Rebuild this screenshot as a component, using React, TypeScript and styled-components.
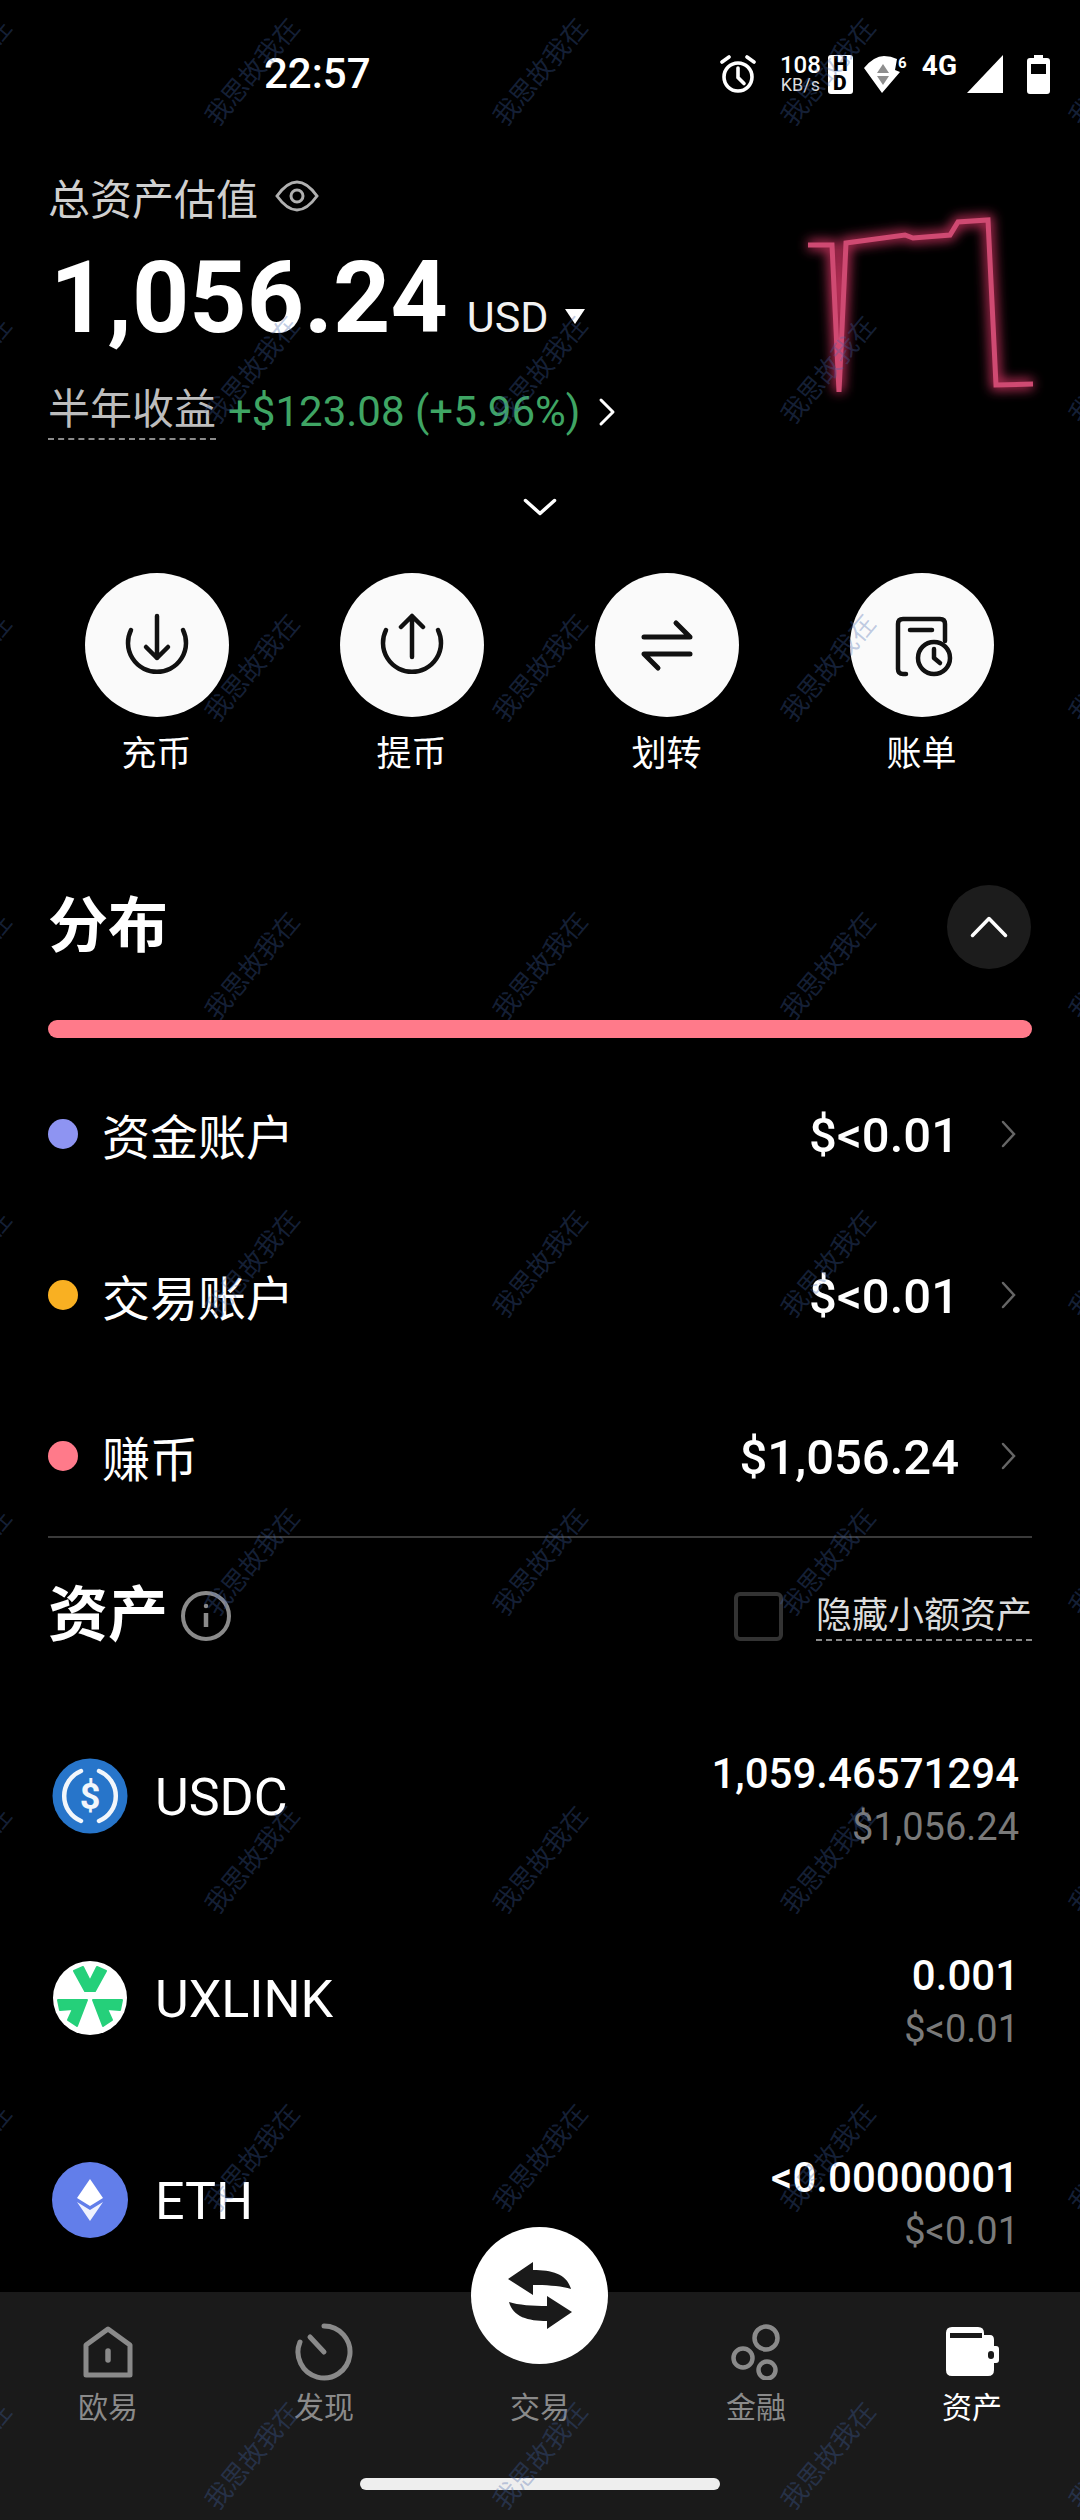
import React from "react";
import styled, { createGlobalStyle } from "styled-components";

const GlobalStyle = createGlobalStyle`
  html, body {
    margin: 0;
    padding: 0;
    background: #000;
  }
  * {
    box-sizing: border-box;
  }
`;

const Page = styled.div`
  position: relative;
  width: 1080px;
  height: 2520px;
  overflow: hidden;
  display: flex;
  flex-direction: column;
  background: #000;
  color: #fff;
  font-family: Roboto, "Noto Sans CJK SC", sans-serif;
`;

const Content = styled.div`
  flex: 1;
  min-height: 0;
  overflow: hidden;
`;

/* status bar */
const StatusBar = styled.div`
  height: 148px;
  display: flex;
  align-items: center;
  padding: 0 30px 0 264px;
`;

const Clock = styled.div`
  font-size: 42px;
  font-weight: 500;
  line-height: 1;
  margin-right: auto;
`;

const StatusSlot = styled.div<{ $gap: number }>`
  display: flex;
  align-items: center;
  margin-left: ${({ $gap }) => $gap}px;
`;

const NetSpeed = styled.div`
  display: flex;
  flex-direction: column;
  align-items: center;
  font-size: 24px;
  font-weight: 500;
  line-height: 21px;
  & > span {
    font-size: 18px;
    line-height: 17px;
    font-weight: 400;
    color: #ddd;
  }
`;

const HdBadge = styled.div`
  width: 25px;
  height: 39px;
  border-radius: 3px;
  background: #fff;
  color: #000;
  display: flex;
  flex-direction: column;
  align-items: center;
  font-size: 21px;
  font-weight: 900;
  line-height: 19px;
`;

const NetType = styled.div`
  font-size: 28px;
  font-weight: 700;
  line-height: 1;
  margin-top: -16px;
`;

/* balance header */
const Header = styled.div`
  display: flex;
  justify-content: space-between;
  height: 294px;
  padding: 0 30px 0 48px;
`;

const HeaderLeft = styled.div`
  display: flex;
  flex-direction: column;
`;

const TitleRow = styled.div`
  height: 96px;
  display: flex;
  align-items: center;
  gap: 17px;
  font-size: 42px;
  color: #cfcfcf;
`;

const BalanceRow = styled.div`
  height: 108px;
  display: flex;
  align-items: baseline;
  padding-left: 2px;
`;

const BalanceValue = styled.div`
  font-size: 100px;
  font-weight: 700;
  line-height: 108px;
`;

const Currency = styled.div`
  font-size: 43px;
  margin-left: 19px;
  color: #f2f2f2;
`;

const Caret = styled.div`
  width: 0;
  height: 0;
  margin-left: 16px;
  border-left: 10px solid transparent;
  border-right: 10px solid transparent;
  border-top: 15px solid #fff;
  transform: translateY(-8px);
`;

const YieldRow = styled.div`
  margin-top: 31px;
  display: flex;
  align-items: center;
  font-size: 42px;
  line-height: 54px;
`;

const YieldLabel = styled.div`
  color: #bdbdbd;
  border-bottom: 2px dashed #8a8a8a;
  padding-bottom: 1px;
  margin-right: 12px;
`;

const YieldValue = styled.div`
  color: #3fa564;
  margin-right: 18px;
`;

const ExpandRow = styled.div`
  height: 131px;
  padding-top: 55px;
  display: flex;
  justify-content: center;
  align-items: flex-start;
`;

const Chart = styled.svg`
  margin-top: 52px;
  flex: none;
`;

/* quick actions */
const Actions = styled.div`
  display: grid;
  grid-template-columns: repeat(4, 255px);
  padding: 0 29px;
`;

const Action = styled.div`
  display: flex;
  flex-direction: column;
  align-items: center;
`;

const ActionCircle = styled.div`
  width: 144px;
  height: 144px;
  border-radius: 50%;
  background: #fafafa;
  display: flex;
  align-items: center;
  justify-content: center;
`;

const ActionLabel = styled.div`
  margin-top: 18px;
  font-size: 35px;
  line-height: 40px;
`;

/* distribution */
const SectionHead = styled.div`
  margin-top: 110px;
  padding: 0 49px 0 48px;
  height: 84px;
  display: flex;
  align-items: center;
  justify-content: space-between;
`;

const SectionTitle = styled.div`
  font-size: 60px;
  font-weight: 700;
  line-height: 1;
`;

const CollapseButton = styled.div`
  width: 84px;
  height: 84px;
  border-radius: 50%;
  background: #1c1c1c;
  display: flex;
  align-items: center;
  justify-content: center;
`;

const DistBar = styled.div`
  margin: 51px 48px 0;
  height: 18px;
  border-radius: 9px;
  background: #ff7a8a;
`;

const DistList = styled.div`
  margin-top: 15px;
  padding: 0 48px;
`;

const DistRow = styled.div`
  height: 161px;
  display: flex;
  align-items: center;
`;

const Dot = styled.div<{ $color: string }>`
  width: 30px;
  height: 30px;
  border-radius: 50%;
  background: ${({ $color }) => $color};
`;

const DistName = styled.div`
  margin-left: 24px;
  font-size: 48px;
  margin-right: auto;
`;

const DistValue = styled.div`
  font-size: 49px;
  font-weight: 500;
  transform: translateY(2px);
`;

const DistArrow = styled.svg`
  margin-left: 42px;
  margin-right: 16px;
`;

const Divider = styled.div`
  margin: 0 48px;
  height: 2px;
  background: #3a3a3a;
`;

/* assets */
const AssetsHead = styled.div`
  height: 100px;
  margin-top: 28px;
  padding: 0 48px;
  display: flex;
  align-items: center;
`;

const AssetsInfo = styled.svg`
  margin-left: 12px;
  margin-right: auto;
`;

const CheckBox = styled.div`
  width: 49px;
  height: 49px;
  border: 4px solid #333;
  border-radius: 6px;
  margin-right: 33px;
`;

const HideLabel = styled.div`
  font-size: 36px;
  line-height: 46px;
  color: #dcdcdc;
  border-bottom: 2px dashed #8a8a8a;
  transform: translateY(1px);
`;

const AssetList = styled.div`
  margin-top: 29px;
  padding: 0 61px 0 52px;
`;

const AssetRow = styled.div`
  height: 202px;
  display: flex;
  align-items: center;
`;

const AssetName = styled.div`
  margin-left: 27px;
  margin-right: auto;
  font-size: 52px;
  transform: translateY(1px);
`;

const AssetAmounts = styled.div`
  display: flex;
  flex-direction: column;
  align-items: flex-end;
  gap: 3px;
  transform: translateY(4px);
`;

const AssetQty = styled.div`
  font-size: 42px;
  font-weight: 500;
  line-height: 50px;
`;

const AssetFiat = styled.div`
  font-size: 38px;
  line-height: 50px;
  color: #7a7a7a;
`;

/* bottom tabs */
const TabBar = styled.div`
  position: relative;
  height: 228px;
  flex: none;
  background: #1a1a1a;
`;

const Tabs = styled.div`
  display: grid;
  grid-template-columns: repeat(5, 216px);
  padding-top: 30px;
`;

const Tab = styled.div`
  display: flex;
  flex-direction: column;
  align-items: center;
`;

const TabIcon = styled.div`
  height: 60px;
  display: flex;
  align-items: center;
  justify-content: center;
`;

const TabLabel = styled.div<{ $active?: boolean }>`
  margin-top: 7px;
  font-size: 30px;
  line-height: 38px;
  color: ${({ $active }) => ($active ? "#fff" : "#8a8a8a")};
`;

const TradeButton = styled.div`
  position: absolute;
  left: 471px;
  top: -65px;
  width: 137px;
  height: 137px;
  border-radius: 50%;
  background: #fff;
  display: flex;
  align-items: center;
  justify-content: center;
`;

const HomeIndicator = styled.div`
  position: absolute;
  left: 360px;
  bottom: 30px;
  width: 360px;
  height: 12px;
  border-radius: 6px;
  background: #eee;
`;

/* watermark */
const WatermarkLayer = styled.div`
  position: absolute;
  left: -182px;
  top: -79px;
  display: grid;
  grid-template-columns: repeat(6, 288px);
  grid-auto-rows: 298px;
  pointer-events: none;
`;

const Watermark = styled.div`
  display: flex;
  align-items: center;
  justify-content: center;
  font-family: "Noto Sans CJK SC", sans-serif;
  font-size: 26px;
  white-space: nowrap;
  color: rgba(66, 100, 170, 0.32);
  transform: rotate(-50deg);
`;

const AlarmIcon = () => (
  <svg width="36" height="38" viewBox="0 0 36 38" fill="none" stroke="#fff" strokeWidth="3.6" strokeLinecap="round">
    <circle cx="18" cy="22" r="14" />
    <path d="M18 13v9.5l6 6" />
    <path d="M2 7l7-5M34 7l-7-5" />
  </svg>
);

const WifiIcon = () => (
  <svg width="44" height="38" viewBox="0 0 44 38">
    <path d="M0 13Q10 1 20 1 27 1 33 4L31 15 36 17 18 38Z" fill="#fff" />
    <path d="M19 9l6 9H13zM13 21h12l-6 9z" fill="#8e8e8e" />
    <text x="34" y="13" fontSize="15" fontWeight="700" fill="#fff">6</text>
  </svg>
);

const SignalIcon = () => (
  <svg width="36" height="38" viewBox="0 0 36 38">
    <path d="M36 0V38H0Z" fill="#fff" />
  </svg>
);

const BatteryIcon = () => (
  <svg width="23" height="39" viewBox="0 0 23 39">
    <path d="M7 0h9v3h4a3 3 0 0 1 3 3v30a3 3 0 0 1-3 3H3a3 3 0 0 1-3-3V6a3 3 0 0 1 3-3h4z" fill="#fff" />
    <rect x="4" y="9" width="15" height="10" fill="#000" />
  </svg>
);

const EyeIcon = () => (
  <svg width="44" height="32" viewBox="0 0 44 32" fill="none" stroke="#b0b0b0" strokeWidth="3">
    <path d="M2 16Q12 2 22 2T42 16Q32 30 22 30T2 16Z" />
    <circle cx="22" cy="16" r="6" />
  </svg>
);

const SmallChevron = ({ dir, color, w, h, sw }: { dir: "right" | "down" | "up"; color: string; w: number; h: number; sw: number }) => {
  const d =
    dir === "right"
      ? `M${sw} ${sw}L${w - sw} ${h / 2}L${sw} ${h - sw}`
      : dir === "down"
        ? `M${sw} ${sw}L${w / 2} ${h - sw}L${w - sw} ${sw}`
        : `M${sw} ${h - sw}L${w / 2} ${sw}L${w - sw} ${h - sw}`;
  return (
    <svg width={w} height={h} viewBox={`0 0 ${w} ${h}`} fill="none" stroke={color} strokeWidth={sw} strokeLinecap="round" strokeLinejoin="round">
      <path d={d} />
    </svg>
  );
};

const DepositIcon = () => (
  <svg width="64" height="64" viewBox="0 0 64 64" fill="none" stroke="#111" strokeWidth="4.5" strokeLinecap="round" strokeLinejoin="round">
    <path d="M6 17A29 29 0 1 0 58 17" />
    <path d="M32 3V45M21 34L32 45L43 34" />
  </svg>
);

const WithdrawIcon = () => (
  <svg width="64" height="64" viewBox="0 0 64 64" fill="none" stroke="#111" strokeWidth="4.5" strokeLinecap="round" strokeLinejoin="round">
    <path d="M6 17A29 29 0 1 0 58 17" />
    <path d="M32 44V3M21 14L32 3L43 14" />
  </svg>
);

const TransferIcon = () => (
  <svg width="64" height="64" viewBox="0 0 64 64" fill="none" stroke="#111" strokeWidth="5" strokeLinecap="round" strokeLinejoin="round">
    <path d="M9 24H55L41 10" />
    <path d="M55 41H9L23 55" />
  </svg>
);

const BillIcon = () => (
  <svg width="64" height="64" viewBox="0 0 64 64" fill="none" stroke="#111" strokeWidth="4.5" strokeLinecap="round" strokeLinejoin="round">
    <path d="M16 61H13Q8 61 8 56V11Q8 6 13 6H50Q55 6 55 11V28" />
    <path d="M20 17H42" />
    <circle cx="44" cy="45" r="16" />
    <path d="M44 36V45L50 50" />
  </svg>
);

const UsdcLogo = () => (
  <svg width="76" height="76" viewBox="0 0 76 76">
    <circle cx="38" cy="38" r="37.5" fill="#2775ca" />
    <path d="M29 13A27 27 0 0 0 29 63M47 13A27 27 0 0 1 47 63" fill="none" stroke="#f2f6fb" strokeWidth="4.5" strokeLinecap="round" />
    <text x="38" y="51" textAnchor="middle" fontSize="36" fontWeight="700" fill="#f2f6fb" fontFamily="Roboto, sans-serif">$</text>
  </svg>
);

const UxlinkLogo = () => (
  <svg width="76" height="76" viewBox="0 0 76 76">
    <circle cx="38" cy="38" r="37" fill="#fff" />
    <g fill="#25d07a" stroke="#25d07a" strokeWidth="2" strokeLinejoin="round">
      <path d="M22 11L31 7 38 21 45 7 54 11 43 31H33Z" />
      <path d="M6 40H35L25 66 16 60 21 49 8 50Z" />
      <path d="M70 40H41L51 66 60 60 55 49 68 50Z" />
    </g>
  </svg>
);

const EthLogo = () => (
  <svg width="76" height="76" viewBox="0 0 76 76">
    <circle cx="38" cy="38" r="38" fill="#627eea" />
    <path d="M38 17L51 36 38 44 25 36Z" fill="#fff" />
    <path d="M38 48L51 40 38 59 25 40Z" fill="#f0f2fd" />
  </svg>
);

const HomeTabIcon = () => (
  <svg width="50" height="52" viewBox="0 0 50 52" fill="none" stroke="#8a8a8a" strokeWidth="5" strokeLinejoin="round">
    <path d="M3 49V19L25 3L47 19V49Z" />
    <path d="M25 25V34" strokeLinecap="round" strokeWidth="5.5" />
  </svg>
);

const DiscoverTabIcon = () => (
  <svg width="58" height="58" viewBox="0 0 58 58" fill="none" stroke="#8a8a8a" strokeWidth="5" strokeLinecap="round">
    <path d="M29 3A26 26 0 1 1 5 19" />
    <path d="M15 14L29 29" />
  </svg>
);

const FinanceTabIcon = () => (
  <svg width="50" height="56" viewBox="0 0 50 56" fill="none" stroke="#8a8a8a" strokeWidth="4.5">
    <circle cx="35" cy="14" r="11.5" />
    <circle cx="12" cy="34" r="9.5" />
    <circle cx="36" cy="46" r="8.5" />
  </svg>
);

const WalletTabIcon = () => (
  <svg width="56" height="52" viewBox="0 0 56 52">
    <path d="M8 1H34Q40 1 40 7V9H46Q50 9 50 14V20H52Q55 20 55 23V34Q55 37 52 37H50V44Q50 50 44 50H8Q2 50 2 44V7Q2 1 8 1Z" fill="#fff" />
    <rect x="6" y="7" width="32" height="5" fill="#1a1a1a" />
    <rect x="44" y="25" width="6" height="8" rx="3" fill="#1a1a1a" />
  </svg>
);

const SwapIcon = () => (
  <svg width="66" height="67" viewBox="0 0 66 67" fill="#1a1a1a">
    <path d="M1 17L26 0V8C45 8 60 12 64 27C55 24 40 23 26 23V33Z" />
    <path d="M65 50L40 67V59C21 59 6 55 2 40C11 43 26 44 40 44V34Z" />
  </svg>
);

const actions = [
  { label: "充币", icon: <DepositIcon /> },
  { label: "提币", icon: <WithdrawIcon /> },
  { label: "划转", icon: <TransferIcon /> },
  { label: "账单", icon: <BillIcon /> },
];

const distribution = [
  { name: "资金账户", value: "$<0.01", color: "#8e94f2" },
  { name: "交易账户", value: "$<0.01", color: "#f9b022" },
  { name: "赚币", value: "$1,056.24", color: "#ff7a8a" },
];

const assets = [
  { name: "USDC", qty: "1,059.46571294", fiat: "$1,056.24", logo: <UsdcLogo /> },
  { name: "UXLINK", qty: "0.001", fiat: "$<0.01", logo: <UxlinkLogo /> },
  { name: "ETH", qty: "<0.00000001", fiat: "$<0.01", logo: <EthLogo /> },
];

const tabs = [
  { label: "欧易", icon: <HomeTabIcon /> },
  { label: "发现", icon: <DiscoverTabIcon /> },
  { label: "交易", icon: null },
  { label: "金融", icon: <FinanceTabIcon /> },
  { label: "资产", icon: <WalletTabIcon />, active: true },
];

const chartLine = "M808 245L832 245L839 392L846 243L905 235L913 238L950 235L958 222L988 220L996 385L1033 384";

const App = () => {
  return (
    <Page>
      <GlobalStyle />
      <Content>
        <StatusBar>
          <Clock>22:57</Clock>
          <StatusSlot $gap={0}>
            <AlarmIcon />
          </StatusSlot>
          <StatusSlot $gap={24}>
            <NetSpeed>
              108
              <span>KB/s</span>
            </NetSpeed>
          </StatusSlot>
          <StatusSlot $gap={7}>
            <HdBadge>
              H<br />D
            </HdBadge>
          </StatusSlot>
          <StatusSlot $gap={11}>
            <WifiIcon />
          </StatusSlot>
          <StatusSlot $gap={14}>
            <NetType>4G</NetType>
          </StatusSlot>
          <StatusSlot $gap={10}>
            <SignalIcon />
          </StatusSlot>
          <StatusSlot $gap={24}>
            <BatteryIcon />
          </StatusSlot>
        </StatusBar>

        <Header>
          <HeaderLeft>
            <TitleRow>
              总资产估值
              <EyeIcon />
            </TitleRow>
            <BalanceRow>
              <BalanceValue>1,056.24</BalanceValue>
              <Currency>USD</Currency>
              <Caret />
            </BalanceRow>
            <YieldRow>
              <YieldLabel>半年收益</YieldLabel>
              <YieldValue>+$123.08 (+5.96%)</YieldValue>
              <SmallChevron dir="right" color="#fff" w={18} h={30} sw={3} />
            </YieldRow>
          </HeaderLeft>
          <Chart width="260" height="210" viewBox="790 200 260 210" fill="none">
            <defs>
              <filter id="glow" x="-20%" y="-20%" width="140%" height="140%">
                <feGaussianBlur stdDeviation="6" />
              </filter>
            </defs>
            <path d={chartLine} stroke="#ff3f78" strokeWidth="10" opacity="0.75" filter="url(#glow)" />
            <path d={chartLine} stroke="#cf4a72" strokeWidth="5" />
          </Chart>
        </Header>
        <ExpandRow>
          <SmallChevron dir="down" color="#fff" w={36} h={20} sw={3.5} />
        </ExpandRow>

        <Actions>
          {actions.map((a) => (
            <Action key={a.label}>
              <ActionCircle>{a.icon}</ActionCircle>
              <ActionLabel>{a.label}</ActionLabel>
            </Action>
          ))}
        </Actions>

        <SectionHead>
          <SectionTitle>分布</SectionTitle>
          <CollapseButton>
            <SmallChevron dir="up" color="#fff" w={40} h={24} sw={3.5} />
          </CollapseButton>
        </SectionHead>
        <DistBar />
        <DistList>
          {distribution.map((d) => (
            <DistRow key={d.name}>
              <Dot $color={d.color} />
              <DistName>{d.name}</DistName>
              <DistValue>{d.value}</DistValue>
              <DistArrow width="15" height="28" viewBox="0 0 15 28" fill="none" stroke="#666" strokeWidth="2.5" strokeLinecap="round">
                <path d="M2 2L13 14L2 26" />
              </DistArrow>
            </DistRow>
          ))}
        </DistList>
        <Divider />

        <AssetsHead>
          <SectionTitle>资产</SectionTitle>
          <AssetsInfo width="52" height="52" viewBox="0 0 52 52" fill="none" stroke="#8a8a8a" strokeWidth="4">
            <circle cx="26" cy="26" r="23" />
            <path d="M26 23V37" strokeWidth="4.5" />
            <circle cx="26" cy="16" r="1.5" fill="#8a8a8a" strokeWidth="1.5" />
          </AssetsInfo>
          <CheckBox />
          <HideLabel>隐藏小额资产</HideLabel>
        </AssetsHead>

        <AssetList>
          {assets.map((a) => (
            <AssetRow key={a.name}>
              {a.logo}
              <AssetName>{a.name}</AssetName>
              <AssetAmounts>
                <AssetQty>{a.qty}</AssetQty>
                <AssetFiat>{a.fiat}</AssetFiat>
              </AssetAmounts>
            </AssetRow>
          ))}
        </AssetList>
      </Content>

      <TabBar>
        <Tabs>
          {tabs.map((t) => (
            <Tab key={t.label}>
              <TabIcon>{t.icon}</TabIcon>
              <TabLabel $active={t.active}>{t.label}</TabLabel>
            </Tab>
          ))}
        </Tabs>
        <TradeButton>
          <SwapIcon />
        </TradeButton>
        <HomeIndicator />
      </TabBar>

      <WatermarkLayer>
        {Array.from({ length: 6 * 10 }, (_, i) => (
          <Watermark key={i}>我思故我在</Watermark>
        ))}
      </WatermarkLayer>
    </Page>
  );
};

export default App;
